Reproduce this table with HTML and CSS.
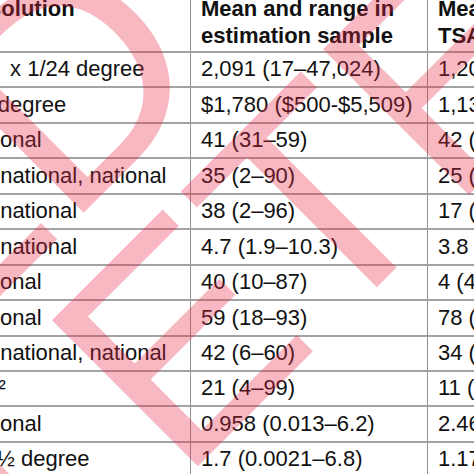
FILE: index.html
```html
<!DOCTYPE html>
<html>
<head>
<meta charset="utf-8">
<link rel="stylesheet" href="styles.css">
</head>
<body>
<div class="page">
  <div class="table">
    <div class="cell head c1"><div class="hd">Resolution<br>&nbsp;</div></div>
    <div class="cell head c2"><div class="hd">Mean and range in<br>estimation sample</div></div>
    <div class="cell head c3"><div class="hd">Mean and range in<br>TSA sample</div></div>

    <div class="cell c1 shift">1/24&nbsp; x 1/24 degree</div>
    <div class="cell c2">2,091 (17–47,024)</div>
    <div class="cell c3">1,204 (12–33,598)</div>

    <div class="cell c1">1/8 degree</div>
    <div class="cell c2">$1,780 ($500-$5,509)</div>
    <div class="cell c3">1,131 ($500-$3,290)</div>

    <div class="cell c1">National</div>
    <div class="cell c2">41 (31–59)</div>
    <div class="cell c3">42 (31–59)</div>

    <div class="cell c1">Subnational, national</div>
    <div class="cell c2">35 (2–90)</div>
    <div class="cell c3">25 (2–90)</div>

    <div class="cell c1">Subnational</div>
    <div class="cell c2">38 (2–96)</div>
    <div class="cell c3">17 (2–96)</div>

    <div class="cell c1">Subnational</div>
    <div class="cell c2">4.7 (1.9–10.3)</div>
    <div class="cell c3">3.8 (1.9–10.3)</div>

    <div class="cell c1">National</div>
    <div class="cell c2">40 (10–87)</div>
    <div class="cell c3">4 (4–87)</div>

    <div class="cell c1">National</div>
    <div class="cell c2">59 (18–93)</div>
    <div class="cell c3">78 (18–93)</div>

    <div class="cell c1">Subnational, national</div>
    <div class="cell c2">42 (6–60)</div>
    <div class="cell c3">34 (6–60)</div>

    <div class="cell c1 shift-sm">1km²</div>
    <div class="cell c2">21 (4–99)</div>
    <div class="cell c3">11 (4–99)</div>

    <div class="cell c1">National</div>
    <div class="cell c2">0.958 (0.013–6.2)</div>
    <div class="cell c3">2.46 (0.013–6.2)</div>

    <div class="cell c1">1 x ½ degree</div>
    <div class="cell c2">1.7 (0.0021–6.8)</div>
    <div class="cell c3">1.17 (0.0021–6.8)</div>
  </div>
  <div class="watermark">
    <div class="wm-line wm-prev">DELETED</div>
    <div class="wm-line">DELETED</div>
  </div>
</div>
</body>
</html>
```
FILE: styles.css
```css
html, body {
  margin: 0;
  padding: 0;
  background: #ffffff;
}
body {
  width: 474px;
  height: 474px;
  overflow: hidden;
}
.page {
  position: relative;
  width: 474px;
  height: 474px;
  overflow: hidden;
  font-family: "Liberation Sans", Arial, sans-serif;
  color: #111111;
}
.table {
  display: grid;
  grid-template-columns: 239px 237px 240px;
  grid-template-rows: 53px repeat(12, 35.45px);
  margin-left: -48px;
}
.cell {
  box-sizing: border-box;
  font-size: 22px;
  line-height: 25px;
  white-space: nowrap;
  padding: 0 9px 5px 9px;
  display: flex;
  align-items: flex-end;
  border-bottom: 2px solid #a3a3a3;
  overflow: hidden;
}
.c1, .c2 {
  border-right: 1.5px solid #8f8f8f;
}
.shift {
  text-indent: -6px;
}
.shift-sm {
  text-indent: -4px;
}
.head {
  font-weight: bold;
  align-items: flex-start;
  padding-bottom: 0;
}
.hd {
  line-height: 27px;
  margin-top: -5px;
}
.c2, .c3 {
  padding-left: 10px;
}
.watermark {
  position: absolute;
  left: -562px;
  top: 6px;
  width: 2200px;
  font-family: "Liberation Sans", Arial, sans-serif;
  font-weight: normal;
  font-size: 300px;
  color: rgba(235, 40, 70, 0.33);
  transform-origin: 607px 309px;
  transform: rotate(-45deg);
  white-space: nowrap;
  pointer-events: none;
}
.wm-line {
  line-height: 320px;
  height: 320px;
}
.wm-prev {
  height: 260px;
  margin-left: -485px;
}
```
